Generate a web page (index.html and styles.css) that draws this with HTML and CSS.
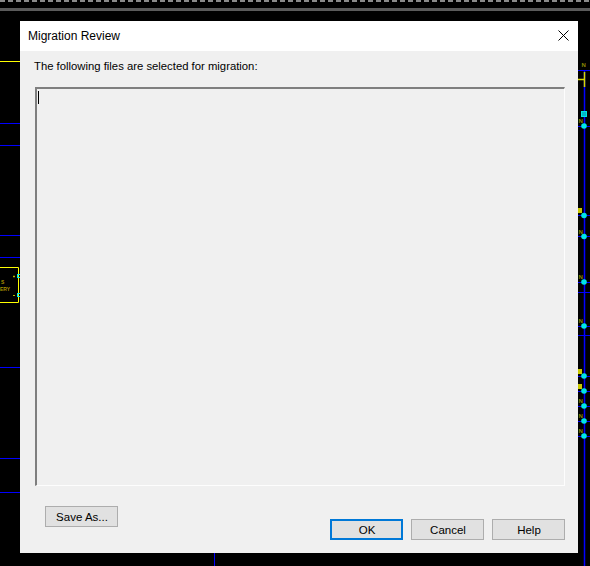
FILE: index.html
```html
<!DOCTYPE html>
<html lang="en">
<head>
<meta charset="utf-8">
<title>Migration Review</title>
<link rel="stylesheet" href="styles.css">
</head>
<body>
<svg class="canvas" width="590" height="566" viewBox="0 0 590 566">
  <path d="M0 1H590" stroke="#8a8a8a" stroke-width="2" stroke-dasharray="5 3" fill="none"/>
  <rect x="0" y="8" width="590" height="3" fill="#5a5a5a"/>
  <g stroke="#0000ff" stroke-width="1" fill="none">
    <path d="M0 123.500H20M0 145.500H20M0 235.500H20M0 257.500H20M0 367.500H20M0 458.500H20M0 492.500H20"/>
    <path d="M214.500 553V566"/>
    <path d="M584.500 70V566" stroke-width="1.500"/>
    <path d="M578 70.500H590M578 126.500H590M578 215.500H590M578 236.500H590M578 282.500H590M578 292.500H590M578 326.500H590M578 335.500H590M578 376.500H590M578 391.500H590M578 406.500H590M578 421.500H590M578 436.500H590"/>
  </g>
  <path d="M0 61.500H20" stroke="#ffff00"/>
  <path d="M578 79.500H584M584.500 72V87" stroke="#d8d800" stroke-width="1.500" fill="none"/>
  <path d="M0 267.500H18.500V302.500H0" stroke="#ffff00" fill="none"/>
  <rect x="17.500" y="274.500" width="3" height="3" fill="none" stroke="#00e5e5"/>
  <rect x="17.500" y="293.500" width="3" height="3" fill="none" stroke="#00e5e5"/>
  <path d="M13 276.500H15M14 275.500V277.500M13 295.500H15" stroke="#b5b500" fill="none"/>
  <text class="mini-label" x="1" y="284">S</text>
  <text class="mini-label" x="0" y="291">ERY</text>
  <rect x="581.500" y="111.500" width="5" height="5" fill="#00b8c8" stroke="#00e5e5"/>
  <g fill="#00e5e5">
    <circle cx="584" cy="126" r="2.800"/><circle cx="584" cy="215.500" r="2.800"/><circle cx="584" cy="236.500" r="2.800"/>
    <circle cx="584" cy="282" r="2.800"/><circle cx="584" cy="326" r="2.800"/><circle cx="584" cy="376" r="2.800"/>
    <circle cx="584" cy="391" r="2.800"/><circle cx="584" cy="406" r="2.800"/><circle cx="584" cy="421" r="2.800"/>
    <circle cx="584" cy="436" r="2.800"/>
  </g>
  <g fill="#c8c800">
    <rect x="578" y="208" width="4" height="5"/><rect x="578" y="369" width="4" height="5"/><rect x="578" y="384" width="4" height="5"/>
  </g>
  <g class="node-labels">
    <text x="581.500" y="67">N</text><text x="578.500" y="123">N</text><text x="578.500" y="234">N</text><text x="578.500" y="279">N</text>
    <text x="578.500" y="323">N</text><text x="578.500" y="403">N</text><text x="578.500" y="418">N</text><text x="578.500" y="433">N</text>
  </g>
</svg>

<section class="dialog">
  <header class="titlebar">
    <span class="title">Migration Review</span>
    <svg class="close" width="11" height="11" viewBox="0 0 11 11"><path d="M0.500 0.500L10.500 10.500M10.500 0.500L0.500 10.500" stroke="#000" fill="none"/></svg>
  </header>
  <div class="content">
    <p class="label">The following files are selected for migration:</p>
    <div class="listbox"><span class="caret"></span></div>
    <footer class="actions">
      <button class="btn save">Save As...</button>
      <div class="right">
        <button class="btn default">OK</button>
        <button class="btn">Cancel</button>
        <button class="btn">Help</button>
      </div>
    </footer>
  </div>
</section>
</body>
</html>
```
FILE: styles.css
```css
html, body {
  margin: 0;
  padding: 0;
  width: 590px;
  height: 566px;
  overflow: hidden;
  background: #000;
  font-family: "Liberation Sans", Arial, sans-serif;
}
.canvas {
  position: absolute;
  left: 0;
  top: 0;
  display: block;
}
.mini-label {
  font-size: 5px;
  font-weight: 700;
  fill: #a89000;
}
.node-labels {
  font-size: 6px;
  font-weight: 700;
  fill: #8a8a00;
}
.dialog {
  position: absolute;
  left: 20px;
  top: 21px;
  width: 558px;
  height: 532px;
  background: #f0f0f0;
  display: flex;
  flex-direction: column;
  color: #000;
}
.titlebar {
  height: 30px;
  background: #fff;
  display: flex;
  align-items: center;
  justify-content: space-between;
  padding: 0 9px 0 8px;
  flex: none;
}
.title {
  font-size: 12px;
  color: #000;
}
.close {
  margin-bottom: 1px;
}
.content {
  flex: 1;
  display: flex;
  flex-direction: column;
  padding: 0 13px 13px 15px;
  min-height: 0;
}
.label {
  margin: 8px 0 0 -1px;
  font-size: 11.300px;
  line-height: 14px;
  height: 14px;
}
.listbox {
  margin-top: 14px;
  height: 399px;
  box-sizing: border-box;
  border-top: 2px solid #7f7f7f;
  border-left: 2px solid #7f7f7f;
  border-right: 1px solid #fdfdfd;
  border-bottom: 1px solid #fdfdfd;
  padding: 2px 0 0 1px;
}
.caret {
  display: block;
  width: 1px;
  height: 13px;
  background: #000;
}
.actions {
  flex: 1;
  display: flex;
  justify-content: space-between;
  align-items: flex-end;
  padding-left: 10px;
}
.right {
  display: flex;
  gap: 8px;
}
.btn {
  width: 73px;
  height: 21px;
  box-sizing: border-box;
  background: #e1e1e1;
  border: 1px solid #adadad;
  border-radius: 0;
  padding: 0 0 0 1px;
  font: 11.500px "Liberation Sans", Arial, sans-serif;
  color: #000;
}
.save {
  margin-bottom: 13px;
}
.default {
  border: 2px solid #0078d7;
}
```
